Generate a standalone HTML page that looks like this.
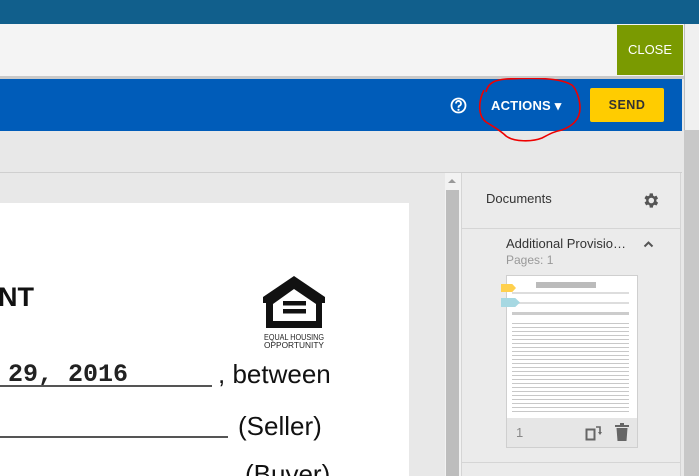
<!DOCTYPE html>
<html><head><style>
*{margin:0;padding:0;box-sizing:border-box}
html,body{width:699px;height:476px;overflow:hidden}
body{position:relative;background:#e8e8e8;font-family:"Liberation Sans",sans-serif}
.a{position:absolute}
</style></head><body>
<div class="a" style="left:0;top:0;width:699px;height:24px;background:#115f8c"></div>
<div class="a" style="left:0;top:24px;width:684px;height:52px;background:#f4f4f4"></div>
<div class="a" style="left:617px;top:25px;width:66px;height:50px;background:#7a9a01;color:#fff;font-size:13px;line-height:50px;text-align:center">CLOSE</div>
<div class="a" style="left:0;top:76px;width:684px;height:3px;background:#c9c9c9"></div>
<div class="a" style="left:0;top:79px;width:682px;height:52px;background:#005cb9"></div>
<svg class="a" style="left:450px;top:97px" width="17" height="17" viewBox="0 0 17 17"><circle cx="8.5" cy="8.5" r="7" fill="none" stroke="#fff" stroke-width="1.8"/><path d="M6 6.5a2.5 2.5 0 1 1 3.3 2.3c-.6.3-.8.7-.8 1.4v.5" fill="none" stroke="#fff" stroke-width="1.8"/><circle cx="8.5" cy="12.8" r="1.1" fill="#fff"/></svg>
<div class="a" style="left:491px;top:98px;color:#fff;font-weight:bold;font-size:13px;letter-spacing:0.2px">ACTIONS ▾</div>
<svg class="a" style="left:476px;top:78px" width="108" height="64" viewBox="0 0 108 64"><path d="M8 12C2 24 2 38 10 44c6 4 14 8 20 14 8 6 26 6 36 2 6-3 10-6 20-8 10-4 18-10 18-22C104 22 100 8 94 6 80-1 50 0 30 1 20 2 12 4 10 14" fill="none" stroke="#e00" stroke-width="1.6"/></svg>
<div class="a" style="left:590px;top:88px;width:74px;height:34px;background:#ffcc00;border-radius:2px;color:#333;font-weight:bold;font-size:12.5px;line-height:34px;text-align:center;letter-spacing:0.5px">SEND</div>
<div class="a" style="left:684px;top:24px;width:15px;height:452px;background:#f0f0f0;border-left:1px solid #bdbdbd"></div>
<div class="a" style="left:684px;top:130px;width:15px;height:346px;background:#c8c8c8"></div>
<div class="a" style="left:0;top:172px;width:682px;height:1px;background:#cfcfcf"></div>
<div class="a" style="left:0;top:203px;width:409px;height:273px;background:#fff;overflow:hidden">
<div class="a" style="left:-2px;top:79px;font-weight:bold;font-size:27px;color:#111">NT</div>
<svg class="a" style="left:261px;top:70px" width="67" height="76" viewBox="0 0 67 76"><path d="M33 3L2 24v6h3v25h56V30h3v-6z" fill="#111"/><path d="M12 31L33 16l22 15v17H12z" fill="#fff"/><rect x="22" y="28" width="23" height="4.5" fill="#111"/><rect x="22" y="36" width="23" height="4.5" fill="#111"/><text x="33" y="67" font-size="8.5" text-anchor="middle" font-family="Liberation Sans" fill="#222" textLength="60" lengthAdjust="spacingAndGlyphs">EQUAL HOUSING</text><text x="33" y="75" font-size="8.5" text-anchor="middle" font-family="Liberation Sans" fill="#222" textLength="60" lengthAdjust="spacingAndGlyphs">OPPORTUNITY</text></svg>
<div class="a" style="left:8px;top:157px;font-family:'Liberation Mono',monospace;font-size:25px;font-weight:bold;color:#222">29, 2016</div>
<div class="a" style="left:0;top:182px;width:212px;height:2px;background:#555"></div>
<div class="a" style="left:218px;top:156px;font-size:26px;color:#111">, between</div>
<div class="a" style="left:0;top:233px;width:228px;height:2px;background:#555"></div>
<div class="a" style="left:238px;top:208px;font-size:26px;color:#111">(Seller)</div>
<div class="a" style="left:245px;top:256px;font-size:26px;color:#111">(Buyer)</div>
</div>
<div class="a" style="left:445px;top:173px;width:16px;height:303px;background:#f2f2f2"></div>
<div class="a" style="left:446px;top:190px;width:13px;height:286px;background:#bdbdbd"></div>
<div class="a" style="left:448px;top:179px;width:0;height:0;border-left:4px solid transparent;border-right:4px solid transparent;border-bottom:4px solid #999"></div>
<div class="a" style="left:461px;top:173px;width:220px;height:303px;background:#ebebeb;border-left:1px solid #d5d5d5;border-right:1px solid #d5d5d5"></div>
<div class="a" style="left:486px;top:191px;font-size:13px;color:#333">Documents</div>
<svg class="a" style="left:641px;top:191px" width="19" height="19" viewBox="0 0 24 24"><path fill="#555" d="M19.4 13a7.5 7.5 0 0 0 0-2l2.1-1.6-2-3.5-2.5 1a7.5 7.5 0 0 0-1.7-1L15 3h-4l-.4 2.7a7.5 7.5 0 0 0-1.7 1l-2.5-1-2 3.5L6.6 11a7.5 7.5 0 0 0 0 2l-2.1 1.6 2 3.5 2.5-1a7.5 7.5 0 0 0 1.7 1L11 21h4l.4-2.7a7.5 7.5 0 0 0 1.7-1l2.5 1 2-3.5zM13 15.5a3.5 3.5 0 1 1 0-7 3.5 3.5 0 0 1 0 7z"/></svg>
<div class="a" style="left:462px;top:228px;width:218px;height:1px;background:#d5d5d5"></div>
<div class="a" style="left:506px;top:236px;font-size:13px;color:#333">Additional Provisio…</div>
<svg class="a" style="left:643px;top:240px" width="11" height="8" viewBox="0 0 11 8"><path d="M1.5 6.5L5.5 2.5l4 4" fill="none" stroke="#555" stroke-width="2"/></svg>
<div class="a" style="left:506px;top:253px;font-size:12px;color:#999">Pages: 1</div>
<div class="a" style="left:506px;top:275px;width:132px;height:173px;background:#e6e6e6;border:1px solid #cfcfcf"></div>
<div class="a" style="left:507px;top:276px;width:130px;height:142px;background:#fff"></div>
<div class="a" style="left:512px;top:320px;width:117px;height:94px;background:repeating-linear-gradient(#fff 0 3px,#c8c8c8 3px 4px)"></div>
<div class="a" style="left:536px;top:282px;width:60px;height:6px;background:#bbb"></div>
<div class="a" style="left:512px;top:292px;width:117px;height:2px;background:#ddd"></div>
<div class="a" style="left:512px;top:302px;width:117px;height:2px;background:#ddd"></div>
<div class="a" style="left:512px;top:312px;width:117px;height:3px;background:#ccc"></div>
<div class="a" style="left:501px;top:284px;width:15px;height:8px;background:#ffd04d;clip-path:polygon(0 0,75% 0,100% 50%,75% 100%,0 100%)"></div>
<div class="a" style="left:501px;top:298px;width:19px;height:9px;background:#a6d8e2;clip-path:polygon(0 0,75% 0,100% 50%,75% 100%,0 100%)"></div>
<div class="a" style="left:516px;top:425px;font-size:13px;color:#888">1</div>
<svg class="a" style="left:585px;top:424px" width="18" height="17" viewBox="0 0 18 17"><rect x="1.5" y="5.5" width="8" height="10" fill="none" stroke="#666" stroke-width="2"/><path d="M11 3h4v6" fill="none" stroke="#666" stroke-width="1.6"/><path d="M13 8l2 3 2-3" fill="#666"/></svg>
<svg class="a" style="left:614px;top:423px" width="16" height="18" viewBox="0 0 16 18"><rect x="1" y="2" width="14" height="2" fill="#666"/><rect x="6" y="0" width="4" height="2" fill="#666"/><path d="M2.5 5h11l-1 13h-9z" fill="#666"/></svg>
<div class="a" style="left:462px;top:462px;width:218px;height:1px;background:#d5d5d5"></div>
</body></html>
